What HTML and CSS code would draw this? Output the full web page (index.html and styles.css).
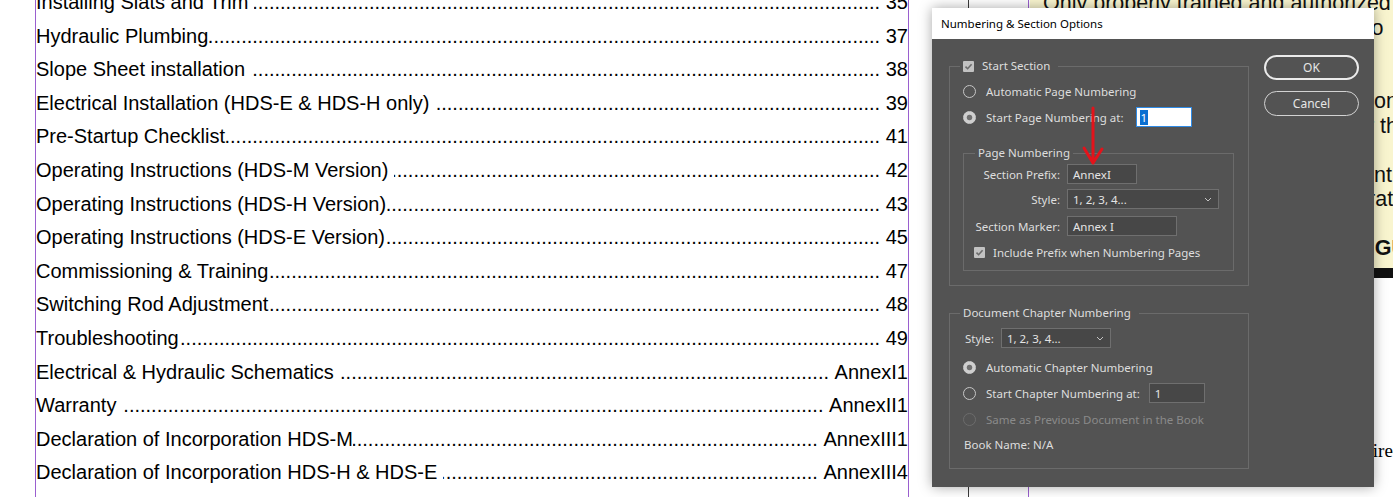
FILE: index.html
```html
<!DOCTYPE html>
<html lang="en">
<head>
  <meta charset="UTF-8">
  <title>Numbering &amp; Section Options</title>
  <link rel="stylesheet" href="styles.css">
</head>
<body>

  <div class="desk">
    <section class="page">
      <ol class="toc">
        <li><span class="entry">Installing Slats and Trim&nbsp;</span><span class="leader"></span><span class="num">&nbsp;35</span></li>
        <li><span class="entry">Hydraulic Plumbing</span><span class="leader"></span><span class="num">&nbsp;37</span></li>
        <li><span class="entry">Slope Sheet installation&nbsp;</span><span class="leader"></span><span class="num">&nbsp;38</span></li>
        <li><span class="entry">Electrical Installation (HDS-E &amp; HDS-H only)&nbsp;</span><span class="leader"></span><span class="num">&nbsp;39</span></li>
        <li><span class="entry">Pre-Startup Checklist</span><span class="leader"></span><span class="num">&nbsp;41</span></li>
        <li><span class="entry">Operating Instructions (HDS-M Version)&nbsp;</span><span class="leader"></span><span class="num">&nbsp;42</span></li>
        <li><span class="entry">Operating Instructions (HDS-H Version)</span><span class="leader"></span><span class="num">&nbsp;43</span></li>
        <li><span class="entry">Operating Instructions (HDS-E Version)</span><span class="leader"></span><span class="num">&nbsp;45</span></li>
        <li><span class="entry">Commissioning &amp; Training</span><span class="leader"></span><span class="num">&nbsp;47</span></li>
        <li><span class="entry">Switching Rod Adjustment</span><span class="leader"></span><span class="num">&nbsp;48</span></li>
        <li><span class="entry">Troubleshooting</span><span class="leader"></span><span class="num">&nbsp;49</span></li>
        <li><span class="entry">Electrical &amp; Hydraulic Schematics&nbsp;</span><span class="leader"></span><span class="num">&nbsp;AnnexI1</span></li>
        <li><span class="entry">Warranty&nbsp;</span><span class="leader"></span><span class="num">&nbsp;AnnexII1</span></li>
        <li><span class="entry">Declaration of Incorporation HDS-M</span><span class="leader"></span><span class="num">&nbsp;AnnexIII1</span></li>
        <li><span class="entry">Declaration of Incorporation HDS-H &amp; HDS-E&nbsp;</span><span class="leader"></span><span class="num">&nbsp;AnnexIII4</span></li>
      </ol>
    </section>

    <div class="pasteboard"></div>

    <section class="page-next">
      <div class="sheet">
        <div class="note">
          <p class="note-text">Only properly trained and authorized personnel may<br>work on this leveller. Always refer to<br>the operating manual.<br><br>Read the safety notes and instructions<br>carefully before working on or near the<br>loading ramp.<br>Keep the manual with the equipment<br>and always make sure that all operators</p>
          <p class="note-head">HYDRAULIC SYSTEMS SAFETY GUIDELINES</p>
        </div>
        <div class="rule"></div>
        <p class="body-text">Check bolts and fittings and tighten as required by the</p>
      </div>
    </section>
  </div>

  <div class="dialog">
    <div class="dialog-title">Numbering &amp; Section Options</div>

    <div class="dialog-body">
      <div class="groups">
        <fieldset class="group section">
          <legend><span class="legend-inner"><span class="check"><svg width="11" height="11" viewBox="0 0 11 11"><path d="M2.5 5.6 L4.6 7.7 L8.6 3.2" fill="none" stroke="#6b6b6b" stroke-width="1.6"/></svg></span>Start Section</span></legend>

          <div class="opt"><span class="radio"></span>Automatic Page Numbering</div>
          <div class="opt"><span class="radio on"></span>Start Page Numbering at:<span class="field-box active"><span class="sel">1</span></span></div>

          <fieldset class="subgroup">
            <legend>Page Numbering</legend>
            <div class="field"><label>Section Prefix:</label><span class="field-box prefix">AnnexI</span></div>
            <div class="field gap5"><label>Style:</label><span class="field-box select wide">1, 2, 3, 4...<svg width="8" height="5" viewBox="0 0 8 5"><path d="M1 1 L4 4 L7 1" fill="none" stroke="#c4c4c4"/></svg></span></div>
            <div class="field gap7"><label>Section Marker:</label><span class="field-box marker">Annex I</span></div>
            <div class="check-row"><span class="check"><svg width="11" height="11" viewBox="0 0 11 11"><path d="M2.5 5.6 L4.6 7.7 L8.6 3.2" fill="none" stroke="#6b6b6b" stroke-width="1.6"/></svg></span>Include Prefix when Numbering Pages</div>
          </fieldset>
        </fieldset>

        <fieldset class="group chapter">
          <legend>Document Chapter Numbering</legend>
          <div class="style-row">Style:<span class="field-box select short">1, 2, 3, 4...<svg width="8" height="5" viewBox="0 0 8 5"><path d="M1 1 L4 4 L7 1" fill="none" stroke="#c4c4c4"/></svg></span></div>
          <div class="opt first"><span class="radio on"></span>Automatic Chapter Numbering</div>
          <div class="opt"><span class="radio"></span>Start Chapter Numbering at:<span class="field-box chapter-start">1</span></div>
          <div class="opt disabled"><span class="radio"></span>Same as Previous Document in the Book</div>
          <div class="book">Book Name: N/A</div>
        </fieldset>
      </div>

      <div class="actions">
        <button class="btn primary">OK</button>
        <button class="btn">Cancel</button>
      </div>
    </div>

    <svg class="arrow" width="26" height="62" viewBox="0 0 26 62"><path d="M13 3 V58 M4 43 L13 58 L22 44" fill="none" stroke="#e3131b" stroke-width="3" stroke-linecap="round" stroke-linejoin="round"/></svg>
  </div>

</body>
</html>
```

FILE: styles.css
```css
body {
  margin: 0;
  width: 1393px;
  height: 497px;
  overflow: hidden;
  background: #fff;
  position: relative;
  font-family: "Liberation Sans", Arial, sans-serif;
}

.desk {
  display: flex;
  height: 497px;
}

/* left page: table of contents */
.page {
  flex: none;
  margin-left: 35px;
  width: 872px;
  border-left: 1px solid #9a5fcf;
  border-right: 1px solid #9a5fcf;
}

.toc {
  list-style: none;
  margin: -14px 0 0 0;
  padding: 0;
  font-size: 20px;
  line-height: 33.6px;
  color: #000;
}

.toc li {
  display: flex;
  white-space: nowrap;
}

.entry, .num {
  flex: none;
}

.leader {
  flex: 1;
  min-width: 0;
  overflow: hidden;
  display: flex;
  justify-content: flex-end;
}

.leader::before {
  content: "....................................................................................................................................................................................";
  flex: none;
}

.pasteboard {
  flex: none;
  width: 59px;
}

/* right page */
.page-next {
  flex: 1;
  border-left: 1px solid #3a3a3a;
  padding-left: 59px;
}

.sheet {
  height: 497px;
  border-left: 1px solid #9a5fcf;
  padding-left: 1px;
}

.note {
  height: 268px;
  background: #f9f5cf;
  overflow: hidden;
  padding-left: 13px;
  font-size: 21.5px;
  line-height: 24.5px;
  color: #111;
  white-space: nowrap;
}

.note-text {
  margin: -9px 0 0 0;
}

.note-head {
  margin: 24.5px 0 0 0;
  font-weight: bold;
}

.rule {
  height: 10px;
  background: #111;
}

.body-text {
  margin: 161px 0 0 13px;
  font-family: "Liberation Serif", "Times New Roman", serif;
  font-size: 19px;
  line-height: 23px;
  white-space: nowrap;
}

/* dialog */
.dialog {
  position: absolute;
  left: 932px;
  top: 8px;
  width: 442px;
  height: 479px;
  background: #535353;
  box-shadow: 0 0 12px rgba(0,0,0,0.35);
  font-family: "Noto Sans", "Open Sans", sans-serif;
  font-size: 11.5px;
  color: #dedede;
  white-space: nowrap;
}

.dialog-title {
  height: 31px;
  line-height: 31px;
  padding-left: 9px;
  background: #fff;
  color: #000;
}

.dialog-body {
  display: flex;
  align-items: flex-start;
  gap: 15px;
  padding: 19px 0 0 17px;
}

.group {
  box-sizing: border-box;
  width: 300px;
  margin: 0;
  min-width: 0;
  border: 1px solid #6b6b6b;
  padding: 4px 14px 14px 10px;
}

.group legend {
  padding: 0 8px 0 3px;
  height: 16px;
  line-height: 16px;
}

.legend-inner {
  display: inline-flex;
  align-items: center;
  gap: 8px;
}

.check {
  display: inline-flex;
  width: 11px;
  height: 11px;
  background: #c2c2c2;
  border-radius: 1px;
  flex: none;
}

.opt {
  display: flex;
  align-items: center;
  gap: 10px;
  height: 26px;
  padding-left: 3px;
}

.radio {
  box-sizing: border-box;
  width: 13px;
  height: 13px;
  border-radius: 50%;
  border: 1px solid #c6c6c6;
  flex: none;
}

.radio.on {
  border-color: #cfcfcf;
  background: radial-gradient(circle, #707070 0 2.4px, #cfcfcf 3.2px);
}

.opt.disabled {
  color: #8a8a8a;
}

.opt.disabled .radio {
  border-color: #6c6c6c;
}

.field-box {
  box-sizing: border-box;
  height: 20px;
  display: inline-flex;
  align-items: center;
  padding: 0 5px;
  background: #474747;
  border: 1px solid #6f6f6f;
  color: #e4e4e4;
}

.field-box.active {
  width: 56px;
  margin-left: 2px;
  background: #fff;
  border-color: #2f8be6;
  padding-left: 3px;
}

.sel {
  background: #0a6fd1;
  color: #fff;
  padding: 0 1px;
  line-height: 15px;
}

.subgroup {
  box-sizing: border-box;
  width: 271px;
  margin: 15px 0 0 3px;
  min-width: 0;
  border: 1px solid #6b6b6b;
  padding: 3px 14px 8px 11px;
}

.subgroup legend {
  padding: 0 3px;
  height: 16px;
  line-height: 16px;
}

.field {
  display: flex;
  align-items: center;
  height: 20px;
}

.field label {
  flex: none;
  width: 85px;
  margin-right: 7px;
  text-align: right;
}

.gap5 { margin-top: 5px; }
.gap7 { margin-top: 7px; }

.prefix { width: 70px; }
.marker { width: 110px; }

.select {
  justify-content: space-between;
  padding-right: 6px;
}

.select.wide { width: 152px; }
.select.short { width: 110px; }

.check-row {
  display: flex;
  align-items: center;
  gap: 8px;
  height: 20px;
  margin: 6px 0 0 -1px;
}

.chapter {
  margin-top: 19px;
  padding-bottom: 10px;
}

.style-row {
  display: flex;
  align-items: center;
  gap: 7px;
  height: 20px;
  margin-top: 3px;
  padding-left: 5px;
}

.opt.first {
  margin-top: 6px;
}

.chapter .field-box.chapter-start {
  width: 56px;
  margin-left: -1px;
}

.book {
  height: 26px;
  line-height: 26px;
  padding-left: 4px;
}

.actions {
  display: flex;
  flex-direction: column;
  gap: 11px;
  margin-top: -3px;
}

.btn {
  box-sizing: border-box;
  width: 95px;
  height: 25px;
  border-radius: 13px;
  border: 1px solid #d2d2d2;
  background: transparent;
  color: #e6e6e6;
  font-family: inherit;
  font-size: 12px;
  padding: 0;
}

.btn.primary {
  border: 2px solid #ebebeb;
}

.arrow {
  position: absolute;
  left: 148px;
  top: 97px;
}
```
